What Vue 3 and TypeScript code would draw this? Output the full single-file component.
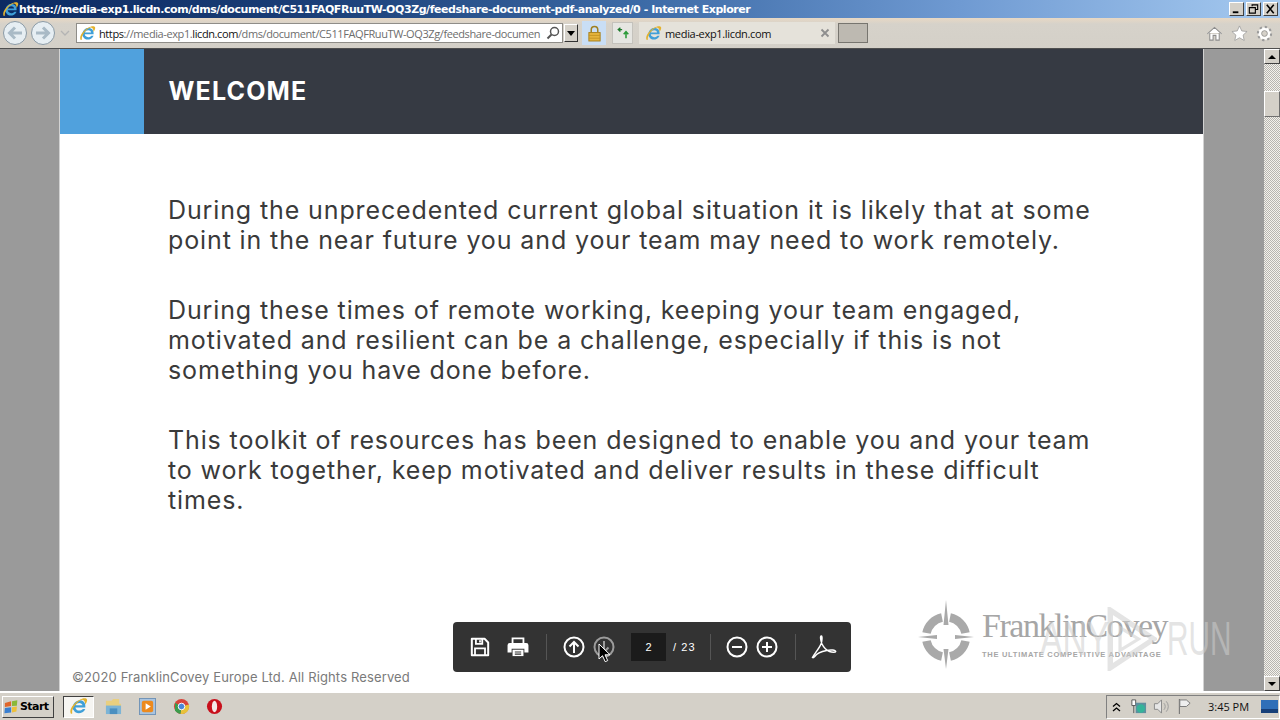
<script setup lang="ts">
const paragraphs: string[][] = [
  ['During the unprecedented current global situation it is likely that at some', 'point in the near future you and your team may need to work remotely.'],
  ['During these times of remote working, keeping your team engaged,', 'motivated and resilient can be a challenge, especially if this is not', 'something you have done before.'],
  ['This toolkit of resources has been designed to enable you and your team', 'to work together, keep motivated and deliver results in these difficult', 'times.'],
]
</script>

<template>
  <div class="screen">
    <header class="titlebar">
      <svg class="ie title-ie" viewBox="0 0 20 20"><use href="#ie-glyph" /></svg>
      <span class="title-text">https://media-exp1.licdn.com/dms/document/C511FAQFRuuTW-OQ3Zg/feedshare-document-pdf-analyzed/0 - Internet Explorer</span>
      <div class="win-buttons">
        <span class="win-btn"><svg viewBox="0 0 14 12"><path d="M3 9.500h6" stroke="#000" stroke-width="2" /></svg></span>
        <span class="win-btn"><svg viewBox="0 0 14 12"><path d="M5.500 3V1.500h6v5H9.500M2.500 4.500h6.500v6H2.500zM2.500 4.500h6.500" fill="none" stroke="#000" stroke-width="1.200" /></svg></span>
        <span class="win-btn"><svg viewBox="0 0 14 12"><path d="M3 1.500l7.500 9M10.500 1.500l-7.500 9" stroke="#000" stroke-width="1.700" /></svg></span>
      </div>
    </header>

    <nav class="toolbar">
      <svg class="nav-btn" viewBox="0 0 26 26"><circle cx="13" cy="13" r="11.500" fill="#e6eef3" stroke="#8b9aa5" /><path d="M20 13H8M13 7.500l-5.500 5.500 5.500 5.500" fill="none" stroke="#a9bac6" stroke-width="3" /></svg>
      <svg class="nav-btn forward" viewBox="0 0 26 26"><circle cx="13" cy="13" r="11.500" fill="#e6eef3" stroke="#8b9aa5" /><path d="M6 13h12M13 7.500l5.500 5.500-5.500 5.500" fill="none" stroke="#a9bac6" stroke-width="3" /></svg>
      <svg class="nav-drop" viewBox="0 0 10 6"><path d="M1 1l4 4 4-4" fill="none" stroke="#b4b4b4" stroke-width="1.300" /></svg>
      <div class="address">
        <svg class="ie addr-ie" viewBox="0 0 20 20"><use href="#ie-glyph" /></svg>
        <span class="url"><b>https</b>://media-exp1.<b>licdn.com</b>/dms/document/C511FAQFRuuTW-OQ3Zg/feedshare-documen</span>
        <svg class="search" viewBox="0 0 14 14"><circle cx="8.500" cy="5.500" r="4" fill="none" stroke="#555" stroke-width="1.500" /><path d="M5.500 8.500L1.500 12.500" stroke="#555" stroke-width="2" /></svg>
      </div>
      <span class="addr-drop"><i></i></span>
      <span class="lock">
        <svg viewBox="0 0 16 18"><path d="M4.500 8V5a3.500 3.500 0 0 1 7 0v3" fill="none" stroke="#a08020" stroke-width="1.600" /><rect x="2" y="8" width="12" height="9" fill="#e5b43c" stroke="#a67f1c" /><path d="M2 11h12M2 14h12" stroke="#c49422" /></svg>
      </span>
      <span class="refresh">
        <svg viewBox="0 0 16 14"><path d="M7 3H3M5 .8L2.500 3 5 5.200" fill="none" stroke="#1e7a2c" stroke-width="1.600" /><path d="M11.500 13V6M8.800 8.500l2.700-3 2.700 3" fill="none" stroke="#2a9a38" stroke-width="1.800" /></svg>
      </span>
      <div class="tab">
        <svg class="ie tab-ie" viewBox="0 0 20 20"><use href="#ie-glyph" /></svg>
        <span class="tab-title">media-exp1.licdn.com</span>
        <svg class="tab-x" viewBox="0 0 10 10"><path d="M1.500 1.500l7 7M8.500 1.500l-7 7" stroke="#8e8e8e" stroke-width="1.800" /></svg>
      </div>
      <span class="new-tab"></span>
      <div class="tools">
        <svg viewBox="0 0 18 18"><path d="M1.500 9.500L9 2.500l7.500 7M4 8.500v7.500h3.500v-5h3v5H14V8.500" fill="#fff" stroke="#8d8d8d" stroke-width="1.100" /></svg>
        <svg viewBox="0 0 18 18"><path d="M9 1l2.400 5.300 5.600.6-4.200 3.800 1.200 5.700L9 13.500l-5 2.900 1.200-5.700L1 6.900l5.600-.6z" fill="#fff" stroke="#9a9a9a" stroke-width=".8" /></svg>
        <svg viewBox="0 0 18 18"><circle cx="9" cy="9" r="5" fill="none" stroke="#fff" stroke-width="3.400" /><circle cx="9" cy="9" r="7" fill="none" stroke="#9a9a9a" stroke-width="2.200" stroke-dasharray="2.500 3" /><circle cx="9" cy="9" r="3" fill="none" stroke="#8d8d8d" stroke-width=".8" /></svg>
      </div>
    </nav>

    <main class="viewer">
      <div class="gutter"></div>
      <article class="page">
        <div class="banner">
          <div class="banner-blue"></div>
          <h1 class="banner-title">WELCOME</h1>
        </div>
        <div class="copy">
          <p v-for="(para, i) in paragraphs" :key="i">
            <span v-for="line in para" :key="line" class="line">{{ line }}</span>
          </p>
        </div>
        <footer class="legal">©2020 FranklinCovey Europe Ltd. All Rights Reserved</footer>
        <div class="logo">
          <svg class="compass" viewBox="0 0 56 70">
            <g fill="none" stroke="#a9a9a9" stroke-width="8.500">
              <path d="M24 17.500A20 20 0 0 0 8.500 33" />
              <path d="M32 17.500A20 20 0 0 1 47.500 33" />
              <path d="M8.500 41A20 20 0 0 0 24 56.500" />
              <path d="M47.500 41A20 20 0 0 1 32 56.500" />
            </g>
            <path d="M28 0l2.500 25h-5zM28 69l2.500-20h-5zM0 37l19-2v4zM56 37l-19-2v4z" fill="#a9a9a9" />
          </svg>
          <div class="logo-text">
            <span class="logo-name">FranklinCovey</span>
            <span class="logo-tag">THE ULTIMATE COMPETITIVE ADVANTAGE</span>
          </div>
        </div>
        <div class="pdf-bar">
          <svg class="pdf-ico" viewBox="0 0 22 22"><path d="M2 2h14l4 4v14H2z" fill="none" stroke="#fff" stroke-width="2.200" stroke-linejoin="round" /><path d="M6.500 2v5.500h7V2" fill="none" stroke="#fff" stroke-width="2" /><path d="M5.500 20v-7.500h11V20" fill="none" stroke="#fff" stroke-width="2" /><path d="M11 3.500v2.500" stroke="#fff" stroke-width="2" /></svg>
          <svg class="pdf-ico print" viewBox="0 0 24 22"><path d="M6 7V1.500h12V7" fill="none" stroke="#fff" stroke-width="2" /><path d="M3 6.500h18a2.500 2.500 0 0 1 2.500 2.500v8H19v-4H5v4H.5V9A2.500 2.500 0 0 1 3 6.500z" fill="#fff" /><path d="M6 14h12v7H6z" fill="#fff" /><path d="M8.500 16.500h7M8.500 18.800h7" stroke="#333" stroke-width="1.300" /></svg>
          <span class="sep sep-1"></span>
          <svg class="pdf-circle" viewBox="0 0 22 22"><circle cx="11" cy="11" r="9.500" fill="none" stroke="#fff" stroke-width="2" /><path d="M11 17V6M6.500 10.500L11 6l4.500 4.500" fill="none" stroke="#fff" stroke-width="2" /></svg>
          <svg class="pdf-circle dim" viewBox="0 0 22 22"><circle cx="11" cy="11" r="9.500" fill="none" stroke="#9c9c9c" stroke-width="2" /><path d="M11 5v11M6.500 11.500L11 16l4.500-4.500" fill="none" stroke="#9c9c9c" stroke-width="2" /></svg>
          <span class="page-input">2</span>
          <span class="page-count">/ 23</span>
          <span class="sep sep-2"></span>
          <svg class="pdf-circle" viewBox="0 0 22 22"><circle cx="11" cy="11" r="9.500" fill="none" stroke="#fff" stroke-width="2" /><path d="M6 11h10" stroke="#fff" stroke-width="2" /></svg>
          <svg class="pdf-circle plus" viewBox="0 0 22 22"><circle cx="11" cy="11" r="9.500" fill="none" stroke="#fff" stroke-width="2" /><path d="M6 11h10M11 6v10" stroke="#fff" stroke-width="2" /></svg>
          <span class="sep sep-3"></span>
          <svg class="acrobat" viewBox="0 0 26 24"><path d="M1.500 22.500C3 19 8 14 10 9c1-3 1.500-8 .3-8S9.500 5 11 9c2 4 5 6.500 7.500 7.500 2.500 1 6 1 6.200 0 .2-1.500-5-2-9-1-5 1-10 3-12 6-.8 1-1.500 1.500-2.200 1z" fill="none" stroke="#fff" stroke-width="1.500" /></svg>
        </div>
      </article>
      <div class="gutter right"></div>
      <aside class="scrollbar">
        <span class="sb-btn"><i class="up"></i></span>
        <span class="sb-thumb"></span>
        <span class="sb-btn end"><i class="down"></i></span>
      </aside>
      <div class="watermark">
        <span class="wm-any">ANY</span>
        <svg class="wm-play" viewBox="0 0 46 62" preserveAspectRatio="none"><path d="M3 3l40 28-40 28z" fill="none" stroke="currentColor" stroke-width="5" /><path d="M12 20l17 11-17 11z" fill="none" stroke="currentColor" stroke-width="3" /></svg>
        <span class="wm-run">RUN</span>
      </div>
      <svg class="cursor" viewBox="0 0 13 20"><path d="M1 1v15l3.500-3.300 2.700 6 2.500-1.100-2.700-5.800H12z" fill="#000" stroke="#fff" /></svg>
    </main>

    <footer class="taskbar">
      <button class="start">
        <svg viewBox="0 0 18 16"><path d="M1 3.500L8 1.500v5.500L1 8z" fill="#e0672c" /><path d="M9 1.500l6-1.200L14.500 6.500 9 7z" fill="#8ab83a" /><path d="M1 9l7-.800v6L.5 15z" fill="#3a7fd0" /><path d="M9 8.200l5.500-.700L14 13l-5 1.300z" fill="#eec03a" /></svg>
        <span>Start</span>
      </button>
      <span class="task-active"><svg class="ie" viewBox="0 0 20 20"><use href="#ie-glyph" /></svg></span>
      <svg class="quick folder" viewBox="0 0 18 18"><path d="M1 3h6l1.500-2H15v5h2v11H1z" fill="#e9cf7f" /><path d="M1 8h16v9H1z" fill="#7cb4d6" /><path d="M5 11h8v6H5z" fill="#4b8fc0" /></svg>
      <svg class="quick media" viewBox="0 0 18 18"><rect x=".5" y=".5" width="17" height="17" fill="#a9c4e0" stroke="#6f93b6" /><rect x="3" y="3" width="12" height="12" rx="2" fill="#ec8a1e" /><path d="M7 5.500l5.500 3.500L7 12.500z" fill="#fff" /></svg>
      <svg class="quick chrome" viewBox="0 0 18 18"><circle cx="9" cy="9" r="8" fill="#d8443a" /><path d="M9 9L2.100 5v8a8 8 0 0 0 6 4z" fill="#3c9c4c" /><path d="M9 9l7.800-2a8 8 0 0 1-8.700 10z" fill="#e8c23a" /><circle cx="9" cy="9" r="3.500" fill="#4a86d8" stroke="#fff" /></svg>
      <svg class="quick opera" viewBox="0 0 18 18"><circle cx="9" cy="9" r="8" fill="#c8101c" /><ellipse cx="9" cy="9" rx="2.800" ry="6" fill="#f4e8e8" /></svg>
      <div class="tray">
        <svg class="t-chev" viewBox="0 0 9 10"><path d="M1 4.500l3.500-3 3.500 3M1 9l3.500-3 3.500 3" fill="none" stroke="#000" stroke-width="1.300" /></svg>
        <svg class="t-net" viewBox="0 0 18 18"><path d="M2 2h4v6H2z" fill="#fff" stroke="#555" /><path d="M4 8v8" stroke="#555" /><rect x="6" y="5" width="11" height="11" fill="#5f8f9f" /><circle cx="11.500" cy="11" r="4.500" fill="#35b39a" /></svg>
        <svg class="t-vol" viewBox="0 0 18 18"><path d="M1.500 6H5l4-4v14l-4-4H1.500z" fill="#e6e6e6" stroke="#888" /><path d="M11.500 5.500a5 5 0 0 1 0 7M14 3.500a8 8 0 0 1 0 11" fill="none" stroke="#999" /></svg>
        <svg class="t-flag" viewBox="0 0 16 18"><path d="M2.500 1v16" stroke="#666" /><path d="M3 2h7l4 3.500L10 9H3z" fill="#eee" stroke="#777" /></svg>
        <span class="clock">3:45 PM</span>
        <svg class="t-desk" viewBox="0 0 17 13"><rect width="17" height="13" fill="#2f6fb8" /><rect y="9" width="17" height="4" fill="#173f78" /></svg>
      </div>
    </footer>

    <svg class="defs" width="0" height="0">
      <defs>
        <g id="ie-glyph">
          <path d="M4 12.500C3.200 7 8 3 12 3.400c4 .4 5.500 3.500 5.200 7.600H6.800c.3 3.500 5 4.500 7.800 1.500h2.600c-2.500 5.500-10 6-12 1.800-.3-.5-.8-1-1.200-1.800zM7 8.800h7.200C14 5.500 8 5.200 7 8.800z" fill="#3f9fd8" />
          <path d="M2 17.500C-.5 14 5 6 11 3.200 14.500 1 18.500.8 19 3c.3 1.500-.8 3.500-2 5.200C17.200 5 16 3 13.500 3 8.500 4.500 2 13.500 3.500 17c-.5.500-1 .700-1.500.500z" fill="#e3b22e" />
        </g>
      </defs>
    </svg>
  </div>
</template>

<style>
html, body { margin: 0; background: #d4d0c8; }
</style>

<style scoped>
.screen {
  position: relative;
  display: flex;
  flex-direction: column;
  width: 1280px;
  height: 720px;
  overflow: hidden;
  background: #d4d0c8;
  font-family: "Liberation Sans", Arial, sans-serif;
}
.defs { position: absolute; }

.titlebar {
  flex: none;
  display: flex;
  align-items: center;
  height: 18px;
  background: linear-gradient(90deg, #0c2a62 0%, #1b3f78 25%, #3c6aa6 50%, #6f9ad2 75%, #a6caf0 100%);
}
.title-ie { width: 17px; height: 17px; margin-left: 2px; }
.title-text {
  margin-left: 0;
  color: #fff;
  font: bold 11px "DejaVu Sans", sans-serif;
  letter-spacing: -0.44px;
  white-space: nowrap;
}
.win-buttons { display: flex; gap: 2px; margin-left: auto; margin-right: 2px; padding-bottom: 1px; }
.win-btn {
  display: flex;
  background: #d4d0c8;
  border: 1px solid;
  border-color: #fff #404040 #404040 #fff;
  box-sizing: content-box;
  width: 13px;
  height: 12px;
}
.win-btn svg { width: 13px; height: 12px; }

.toolbar {
  flex: none;
  display: flex;
  align-items: center;
  height: 31px;
  box-sizing: border-box;
  border-bottom: 1px solid #4f4f4f;
  background: linear-gradient(180deg, #e8d8c4 0, #d6d2ca 6px, #d4d0c8 100%);
}
.nav-btn { width: 26px; height: 26px; margin-left: 2px; }
.nav-drop { width: 10px; height: 6px; margin-left: 4px; }
.address {
  display: flex;
  align-items: center;
  width: 487px;
  height: 20px;
  margin-left: 6px;
  box-sizing: border-box;
  background: #fff;
  border: 1px solid #8f8d88;
}
.addr-ie { flex: none; width: 17px; height: 17px; margin-left: 2px; }
.url {
  flex: 1;
  margin-left: 3px;
  overflow: hidden;
  white-space: nowrap;
  color: #6d6d6d;
  font: 11px "Open Sans", sans-serif;
  letter-spacing: -0.4px;
}
.url b { color: #111; font-weight: 400; }
.search { flex: none; width: 14px; height: 14px; margin: 0 2px 0 4px; }
.addr-drop {
  display: flex;
  align-items: center;
  justify-content: center;
  width: 14px;
  height: 18px;
  margin-left: 1px;
  box-sizing: border-box;
  border: 1px solid;
  border-color: #fff #333 #333 #fff;
}
.addr-drop i { border: 4px solid transparent; border-top: 5px solid #000; border-bottom: 0; }
.lock {
  display: flex;
  align-items: center;
  justify-content: center;
  width: 24px;
  height: 24px;
  margin-left: 4px;
  background: #c9def5;
}
.lock svg { width: 15px; height: 17px; }
.refresh {
  display: flex;
  align-items: center;
  justify-content: center;
  width: 21px;
  height: 22px;
  margin-left: 6px;
  background: #e6e6e2;
  border: 1px solid #c4c2bc;
  box-sizing: border-box;
}
.refresh svg { width: 14px; height: 12px; }
.tab {
  display: flex;
  align-items: center;
  width: 196px;
  height: 22px;
  margin-left: 6px;
  background: #e5e2da;
}
.tab-ie { width: 17px; height: 17px; margin-left: 6px; }
.tab-title { margin-left: 3px; font: 11px "Open Sans", sans-serif; letter-spacing: -0.32px; color: #111; white-space: nowrap; }
.tab-x { width: 10px; height: 10px; margin-left: auto; margin-right: 5px; }
.new-tab {
  width: 30px;
  height: 20px;
  margin-left: 3px;
  background: #bdb9b1;
  border: 1px solid #77756f;
  box-sizing: border-box;
}
.tools { display: flex; gap: 8px; margin-left: auto; margin-right: 7px; }
.tools svg { width: 17px; height: 17px; }

.viewer {
  position: relative;
  flex: 1;
  display: flex;
  min-height: 0;
  background: #9a9a9a;
}
.gutter { width: 59px; flex: none; background: #9a9a9a; }
.gutter.right { width: 60px; border-left: 1px solid #d2d2d2; }
.page {
  position: relative;
  display: flex;
  flex-direction: column;
  width: 1143px;
  flex: none;
  border-left: 1px solid #d2d2d2;
  background: #fff;
}
.banner { flex: none; display: flex; align-items: center; height: 85px; background: #363a43; }
.banner-blue { width: 84px; height: 100%; background: #50a1dd; }
.banner-title {
  margin: 0 0 0 24.500px;
  color: #fff;
  font: 700 25px/1 Inter, sans-serif;
  letter-spacing: 1.15px;
}
.copy { flex: 1; padding: 61px 0 0 108px; }
.copy p { margin: 0 0 40px; }
.line {
  display: block;
  height: 30px;
  color: #3a3a3a;
  font: 400 25px/30px Inter, sans-serif;
  letter-spacing: 0.88px;
  white-space: nowrap;
}
.legal {
  flex: none;
  padding: 0 0 6px 12px;
  color: #7a7a7a;
  font: 13px/16px Inter, sans-serif;
  letter-spacing: 0.14px;
}
.logo {
  position: absolute;
  left: 858px;
  top: 551px;
  display: flex;
  align-items: flex-start;
}
.compass { width: 56px; height: 70px; }
.logo-text { display: flex; flex-direction: column; margin-left: 8px; }
.logo-name {
  margin-top: 5px;
  color: #a6a6a6;
  font: 34px/42px "Liberation Serif", serif;
  letter-spacing: -1.45px;
  white-space: nowrap;
}
.logo-tag {
  margin-top: 3px;
  color: #a6a6a6;
  font: bold 7.500px/10px "Liberation Sans", sans-serif;
  letter-spacing: 0.72px;
  white-space: nowrap;
}
.pdf-bar {
  position: absolute;
  left: 393px;
  top: 573px;
  display: flex;
  align-items: center;
  width: 398px;
  height: 50px;
  box-sizing: border-box;
  padding-left: 17px;
  border-radius: 4px;
  background: #333333;
  color: #fff;
}
.pdf-ico { width: 20px; height: 20px; flex: none; }
.pdf-ico.print { width: 22px; margin-left: 17px; }
.sep { width: 1px; height: 26px; flex: none; background: #555; }
.sep-1 { margin-left: 17px; }
.pdf-circle { width: 22px; height: 22px; flex: none; }
.sep-1 + .pdf-circle { margin-left: 16px; }
.pdf-circle.dim { margin-left: 8px; }
.pdf-circle.plus { margin-left: 8px; }
.page-input {
  width: 35px;
  height: 28px;
  margin-left: 16px;
  flex: none;
  background: #1b1b1b;
  font: 11px/28px "Liberation Sans", sans-serif;
  text-align: center;
}
.page-count { margin-left: 7px; font: 11px "Liberation Sans", sans-serif; letter-spacing: 1.1px; white-space: nowrap; }
.sep-2 { margin-left: 14px; }
.sep-2 + .pdf-circle { margin-left: 15px; }
.sep-3 { margin-left: 17px; }
.acrobat { width: 26px; height: 24px; margin-left: 15px; flex: none; }

.scrollbar {
  position: absolute;
  right: 0;
  top: 0;
  bottom: 0;
  display: flex;
  flex-direction: column;
  width: 16px;
  background-color: #ece9e2;
  background-image: conic-gradient(#b7b5b0 25%, #f4f2ec 0 50%, #b7b5b0 0 75%, #f4f2ec 0);
  background-size: 2px 2px;
}
.sb-btn {
  display: flex;
  align-items: center;
  justify-content: center;
  height: 15px;
  flex: none;
  box-sizing: border-box;
  background: #d4d0c8;
  border: 1px solid;
  border-color: #fff #404040 #404040 #fff;
}
.sb-btn.end { margin-top: auto; }
.sb-btn i { border: 4px solid transparent; }
.sb-btn .up { border-top: 0; border-bottom: 4px solid #000; }
.sb-btn .down { border-bottom: 0; border-top: 4px solid #000; }
.sb-thumb {
  height: 26px;
  margin-top: 27px;
  flex: none;
  box-sizing: border-box;
  background: #d4d0c8;
  border: 1px solid;
  border-color: #fff #6f6f6f #6f6f6f #fff;
}
.watermark {
  position: absolute;
  left: 1040px;
  top: 558px;
  display: flex;
  align-items: center;
  color: rgba(205, 205, 205, 0.55);
  font: 48px/64px "Liberation Sans", sans-serif;
  pointer-events: none;
}
.wm-any { display: inline-block; width: 67px; transform: scaleX(0.7); transform-origin: left; }
.wm-play { width: 50px; height: 64px; flex: none; }
.wm-run { display: inline-block; width: 62px; margin-left: 10px; transform: scaleX(0.62); transform-origin: left; white-space: nowrap; }
.cursor { position: absolute; left: 598px; top: 594px; width: 13px; height: 20px; }

.taskbar {
  flex: none;
  position: relative;
  display: flex;
  align-items: center;
  height: 29px;
  box-sizing: border-box;
  border-top: 2px solid #fff;
  background: #d4d0c8;
}
.start {
  display: flex;
  align-items: center;
  gap: 0;
  width: 52px;
  height: 22px;
  margin-left: 2px;
  padding: 0 0 0 1px;
  box-sizing: border-box;
  background: #d4d0c8;
  border: 1px solid;
  border-color: #fff #404040 #404040 #fff;
  font: bold 11px "DejaVu Sans", sans-serif;
  letter-spacing: -0.55px;
  color: #000;
}
.start svg { width: 16px; height: 16px; flex: none; }
.task-active {
  display: flex;
  align-items: center;
  justify-content: center;
  width: 31px;
  height: 22px;
  margin-left: 9px;
  box-sizing: border-box;
  background: #f6f5f2;
  border: 1px solid;
  border-color: #404040 #fff #fff #404040;
}
.task-active svg { width: 19px; height: 19px; }
.quick { width: 17px; height: 17px; flex: none; }
.folder { margin-left: 11px; }
.media { margin-left: 17px; }
.chrome { margin-left: 17px; }
.opera { margin-left: 16px; }
.tray {
  display: flex;
  align-items: center;
  height: 24px;
  margin-left: auto;
  width: 174px;
  box-sizing: border-box;
  border: 1px solid;
  border-color: #808080 #fff #fff #808080;
}
.tray svg { flex: none; }
.t-chev { width: 9px; height: 10px; margin-left: 5px; }
.t-net { width: 17px; height: 17px; margin-left: 9px; }
.t-vol { width: 17px; height: 17px; margin-left: 6px; }
.t-flag { width: 15px; height: 17px; margin-left: 7px; }
.clock {
  margin-left: 16px;
  font: 11px "Open Sans", sans-serif;
  color: #111;
  white-space: nowrap;
}
.t-desk { width: 17px; height: 13px; margin-left: auto; margin-right: 1px; }
</style>
